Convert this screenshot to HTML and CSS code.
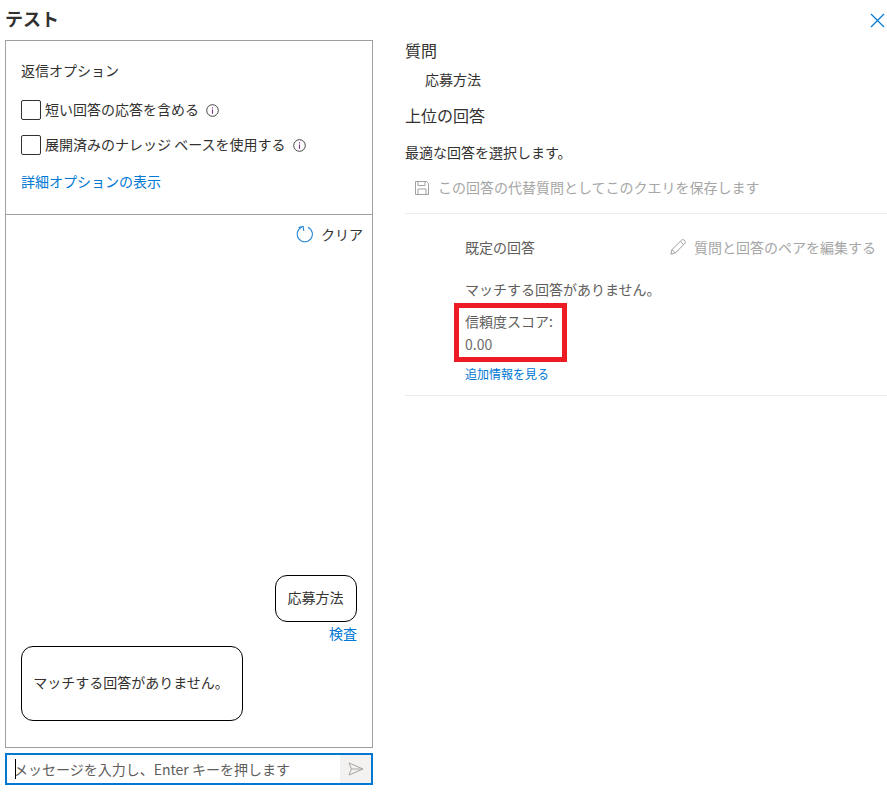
FILE: index.html
```html
<!DOCTYPE html>
<html lang="ja">
<head>
<meta charset="utf-8">
<title>テスト</title>
<link rel="stylesheet" href="styles.css">
</head>
<body>
<div class="page">
  <header class="header">
    <h1 class="title">テスト</h1>
    <svg class="close" width="15" height="15" viewBox="0 0 15 15"><path d="M1 1l13 13M14 1L1 14" fill="none" stroke="#0078d4" stroke-width="1.2"/></svg>
  </header>
  <div class="columns">
    <section class="left">
      <div class="panel">
        <div class="options">
          <div class="options-title">返信オプション</div>
          <label class="check-row"><span class="box"></span><span class="check-text">短い回答の応答を含める</span>
            <svg class="info" width="13" height="13" viewBox="0 0 13 13"><circle cx="6.5" cy="6.5" r="5.8" fill="none" stroke="#444" stroke-width="1"/><path d="M6.5 5.5v4.2M6.5 3.2v1.2" stroke="#7a2d8f" stroke-width="1.1"/></svg></label>
          <label class="check-row second"><span class="box"></span><span class="check-text">展開済みのナレッジ ベースを使用する</span>
            <svg class="info info-wide" width="13" height="13" viewBox="0 0 13 13"><circle cx="6.5" cy="6.5" r="5.8" fill="none" stroke="#444" stroke-width="1"/><path d="M6.5 5.5v4.2M6.5 3.2v1.2" stroke="#7a2d8f" stroke-width="1.1"/></svg></label>
          <a class="link adv">詳細オプションの表示</a>
        </div>
        <div class="chat">
          <div class="clear-row">
            <svg class="refresh" width="18" height="18" viewBox="0 0 18 18"><path d="M12 2.2A7.6 7.6 0 1 1 5.6 2.2" fill="none" stroke="#2b88d8" stroke-width="1.1"/><path d="M2.6 2.6L7.2 1.4l.6 4.6" fill="none" stroke="#2b88d8" stroke-width="1.1"/></svg>
            <span>クリア</span>
          </div>
          <div class="messages">
            <div class="bubble user">応募方法</div>
            <a class="link inspect">検査</a>
            <div class="bubble bot">マッチする回答がありません。</div>
          </div>
        </div>
      </div>
      <div class="input">
        <span class="placeholder">メッセージを入力し、Enter キーを押します</span>
        <span class="send">
          <svg width="16" height="14" viewBox="0 0 16 14"><path d="M1 1l14 6-14 6 2.4-6zM3.4 7H15" fill="none" stroke="#a6a6a6" stroke-width="1"/></svg>
        </span>
      </div>
    </section>
    <section class="right">
      <h2 class="head q">質問</h2>
      <div class="query">応募方法</div>
      <h2 class="head top">上位の回答</h2>
      <div class="hint">最適な回答を選択します。</div>
      <div class="save">
        <svg class="save-icon" width="14" height="14" viewBox="0 0 14 14"><path d="M.5.5h11l2 2v11H.5zM3 .5v4h7v-4M3 13.5V8h8v5.5" fill="none" stroke="#a0a0a0" stroke-width="1"/></svg>
        <span>この回答の代替質問としてこのクエリを保存します</span>
      </div>
      <div class="answer">
        <div class="answer-top">
          <span>既定の回答</span>
          <span class="edit">
            <svg width="16" height="16" viewBox="0 0 16 16"><path d="M.8 15.2l1.2-4.6L11.8 1a1.5 1.5 0 0 1 2.1 0l1.1 1.1a1.5 1.5 0 0 1 0 2.1L5.4 14zM2 10.6L5.4 14M10.4 2.4l3.2 3.2" fill="none" stroke="#a0a0a0" stroke-width="1"/></svg>
            <span>質問と回答のペアを編集する</span>
          </span>
        </div>
        <div class="no-match">マッチする回答がありません。</div>
        <div class="score"><div>信頼度スコア:</div><div class="score-val">0.00</div></div>
        <a class="link more">追加情報を見る</a>
      </div>
    </section>
  </div>
</div>
</body>
</html>
```
FILE: styles.css
```css
* { box-sizing: border-box; }
html, body { margin: 0; padding: 0; background: #fff; }
body {
  font-family: "Noto Sans CJK JP", "Noto Sans", sans-serif;
  font-size: 14px;
  color: #323130;
}
.page { width: 887px; height: 799px; overflow: hidden; }
.header {
  height: 40px;
  display: flex;
  justify-content: space-between;
  padding: 0 2px 0 5px;
}
.title { margin: 4px 0 0; font-size: 18px; line-height: 28px; font-weight: 700; }
.close { margin-top: 13px; }
.columns { display: flex; }
.left { width: 368px; margin-left: 5px; }
.panel {
  height: 708px;
  border: 1px solid #a0a0a0;
  display: flex;
  flex-direction: column;
}
.options {
  height: 174px;
  flex: none;
  border-bottom: 1px solid #a0a0a0;
  padding: 19px 15px 0;
}
.options-title { line-height: 20px; }
.check-row { display: flex; align-items: center; height: 20px; margin-top: 20px; gap: 4px; }
.check-row.second { margin-top: 15px; }
.check-text { padding-bottom: 2px; }
.box { width: 20px; height: 20px; border: 1px solid #323130; border-radius: 2px; }
.info { margin-left: 3px; margin-top: 1px; }
.info-wide { margin-left: 4px; }
.link { color: #0078d4; display: block; }
.adv { margin-top: 16px; line-height: 20px; }
.chat { flex: 1; display: flex; flex-direction: column; }
.clear-row {
  display: flex;
  justify-content: flex-end;
  align-items: center;
  gap: 7px;
  padding: 9px 9px 0 0;
  line-height: 20px;
}
.messages {
  flex: 1;
  display: flex;
  flex-direction: column;
  padding: 0 15px 26px;
  justify-content: flex-end;
}
.bubble { border: 1px solid #000; border-radius: 12px; display: flex; align-items: center; justify-content: center; padding-bottom: 3px; }
.user { align-self: flex-end; width: 82px; height: 47px; padding-right: 1px; }
.inspect { align-self: flex-end; line-height: 20px; margin-top: 1px; }
.bot { width: 222px; height: 75px; margin-top: 3px; padding-right: 2px; }
.input {
  margin-top: 5px;
  height: 32px;
  border: 2px solid #0078d4;
  display: flex;
  justify-content: space-between;
  align-items: stretch;
}
.placeholder {
  color: #605e5c;
  padding-left: 6px;
  line-height: 28px;
  border-left: 1px solid transparent;
  position: relative;
}
.placeholder::before {
  content: "";
  position: absolute;
  left: 7px;
  top: 4px;
  width: 1px;
  height: 20px;
  background: #000;
}
.send { width: 31px; background: #f3f2f1; display: flex; align-items: center; justify-content: center; }
.right { margin-left: 32px; width: 482px; }
.head { margin: 0; font-size: 16px; font-weight: 400; line-height: 22px; }
.q { margin-top: -1px; }
.query { margin: 8px 0 0 20px; line-height: 20px; }
.top { margin-top: 15px; }
.hint { margin-top: 16px; line-height: 20px; }
.save {
  display: flex;
  align-items: center;
  gap: 9px;
  margin-top: 15px;
  padding: 0 0 16px 10px;
  color: #a6a6a6;
  line-height: 20px;
  border-bottom: 1px solid #edebe9;
}
.save-icon { margin-top: 2px; }
.answer { padding: 23px 11px 12px 60px; border-bottom: 1px solid #edebe9; color: #605e5c; }
.answer-top { display: flex; justify-content: space-between; line-height: 20px; }
.edit { display: flex; align-items: center; gap: 8px; color: #a6a6a6; }
.no-match { margin-top: 22px; line-height: 20px; }
.score {
  margin: 4px 0 0 -11px;
  width: 113px;
  height: 59px;
  border: 5px solid #ed1c24;
  padding: 3px 0 0 6px;
  line-height: 21px;
}
.score-val { margin-top: 2px; color: #6e6c6a; }
.more { font-size: 12px; margin-top: 3px; line-height: 18px; }
```
